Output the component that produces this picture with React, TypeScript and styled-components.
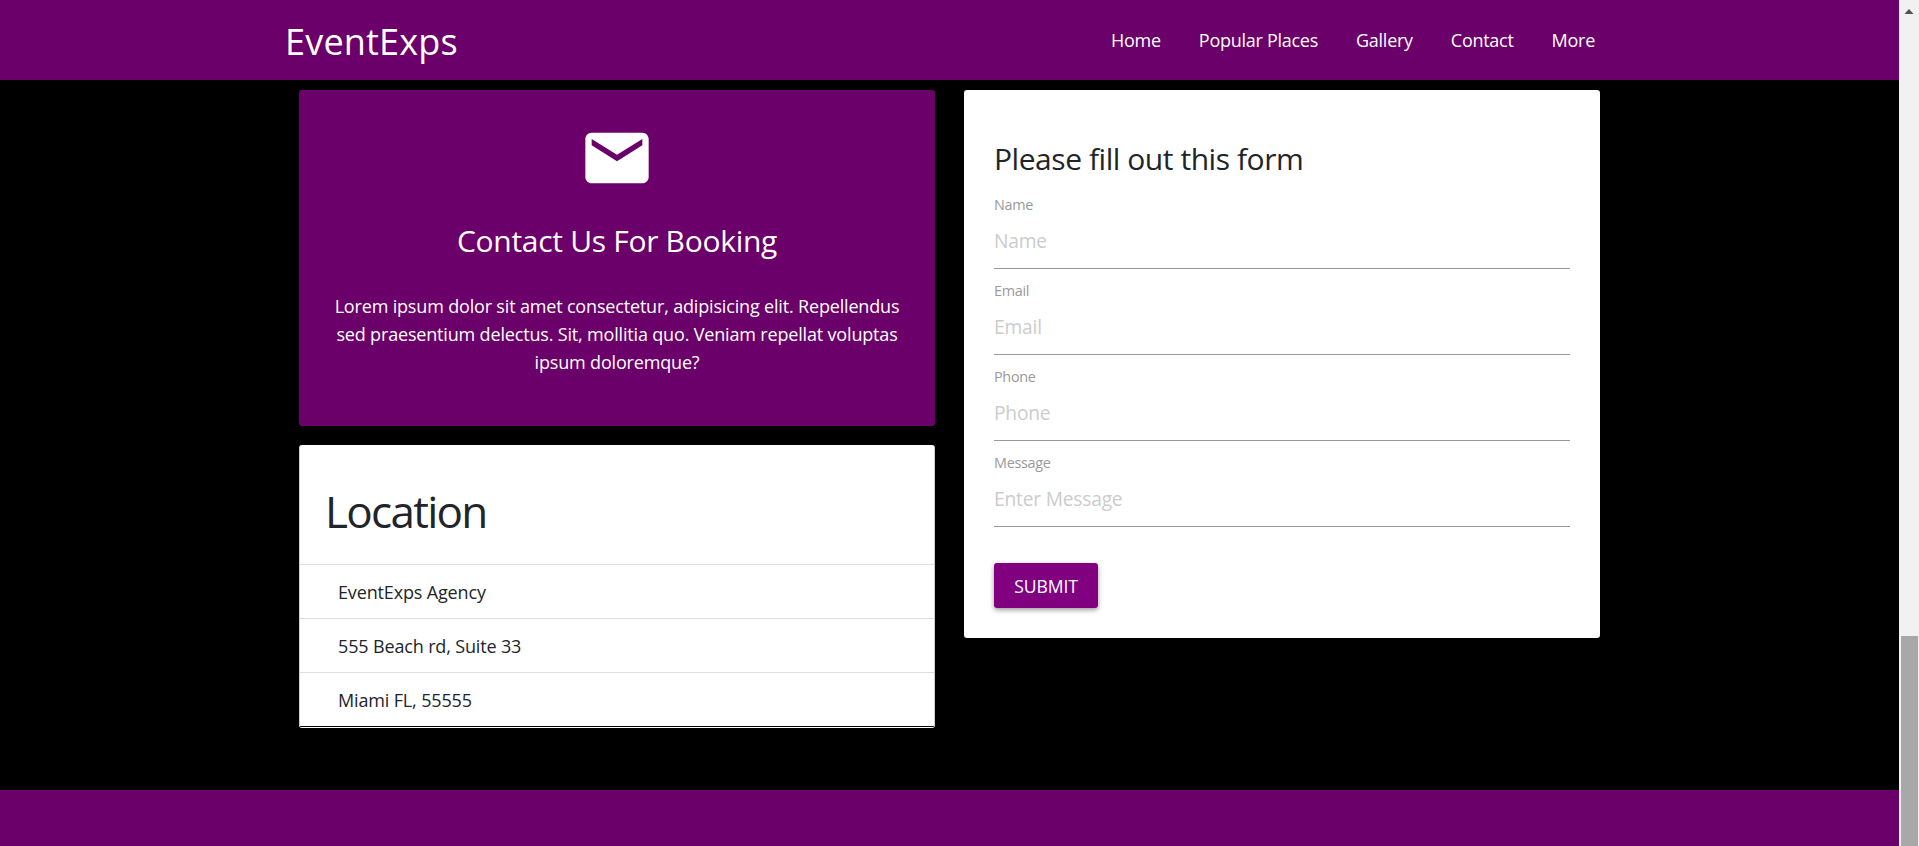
import React from 'react';
import styled, { createGlobalStyle } from 'styled-components';

const purple = '#6b006b';

const GlobalStyle = createGlobalStyle`
  * {
    box-sizing: border-box;
  }

  html,
  body {
    margin: 0;
    height: 100%;
    overflow: hidden;
    background: #000;
    font-family: 'Open Sans', 'Noto Sans', sans-serif;
  }
`;

const Shell = styled.div`
  display: flex;
  height: 846px;
`;

const Page = styled.div`
  flex: 1;
  min-width: 0;
  display: flex;
  flex-direction: column;
`;

const Navbar = styled.nav`
  height: 80px;
  flex: none;
  background: ${purple};
  display: flex;
  align-items: center;
  justify-content: space-between;
  padding: 0 304px 0 285px;
`;

const Brand = styled.a`
  color: #fff;
  font-size: 36px;
  line-height: 1;
  letter-spacing: 0.2px;
  padding-top: 3px;
`;

const NavLinks = styled.ul`
  display: flex;
  gap: 38px;
  margin: 0;
  padding: 0 0 1px;
  list-style: none;
`;

const NavLink = styled.li`
  color: #fff;
  font-size: 18px;
  letter-spacing: -0.27px;
`;

const Main = styled.main`
  flex: 1;
  display: grid;
  grid-template-columns: 636px 636px;
  column-gap: 29px;
  align-content: start;
  padding: 10px 0 0 299px;
`;

const LeftColumn = styled.div`
  display: flex;
  flex-direction: column;
  gap: 19px;
`;

const Card = styled.section`
  background: #fff;
  border-radius: 3px;
  overflow: hidden;
`;

const BookingCard = styled(Card)`
  height: 336px;
  background: ${purple};
  color: #fff;
  text-align: center;
  padding: 30px 30px 0;
`;

const MailIcon = styled.svg`
  display: block;
  width: 76px;
  height: 76px;
  margin: 0 auto 27px;
  fill: #fff;
`;

const BookingTitle = styled.h2`
  margin: 0 0 33px;
  font-size: 30px;
  font-weight: 400;
  line-height: 36px;
  letter-spacing: -0.3px;
`;

const BookingText = styled.p`
  margin: 0;
  font-size: 18px;
  line-height: 28px;
  letter-spacing: -0.17px;
`;

const LocationCard = styled(Card)`
  height: 283px;
  border-left: 1px solid #ccc;
  border-right: 1px solid #ccc;
`;

const LocationTitle = styled.h1`
  height: 119px;
  margin: 0;
  padding: 12px 0 0 25px;
  display: flex;
  align-items: center;
  color: #212529;
  font-size: 44px;
  font-weight: 400;
  letter-spacing: -1.7px;
`;

const LocationList = styled.ul`
  margin: 0;
  padding: 0;
  list-style: none;
  border-bottom: 1px solid #000;
`;

const LocationItem = styled.li`
  height: 54px;
  display: flex;
  align-items: center;
  padding-left: 38px;
  border-top: 1px solid #ddd;
  color: #212529;
  font-size: 18px;
  letter-spacing: -0.15px;
`;

const FormCard = styled(Card)`
  height: 548px;
  padding: 48px 30px 0;
`;

const FormTitle = styled.h3`
  margin: 0 0 3px;
  color: #212529;
  font-size: 30px;
  font-weight: 400;
  line-height: 42px;
  letter-spacing: -0.45px;
`;

const Field = styled.label`
  display: block;
  height: 86px;
  padding-top: 12px;
  border-bottom: 1px solid #999;
`;

const FieldLabel = styled.span`
  display: block;
  color: #999;
  font-size: 14.4px;
  line-height: 20px;
  letter-spacing: -0.3px;
`;

const FieldInput = styled.input`
  display: block;
  width: 100%;
  height: 42px;
  margin-top: 4px;
  padding: 0;
  border: 0;
  outline: 0;
  background: transparent;
  font-family: inherit;
  font-size: 19.2px;
  letter-spacing: -0.2px;

  &::placeholder {
    color: #ccc;
    opacity: 1;
  }
`;

const SubmitButton = styled.button`
  display: block;
  width: 104px;
  height: 45px;
  margin-top: 36px;
  border: 0;
  border-radius: 3px;
  background: #800080;
  color: #fff;
  font-family: inherit;
  font-size: 17.6px;
  letter-spacing: -0.1px;
  box-shadow: 0 2px 5px rgba(0, 0, 0, 0.4);
`;

const Footer = styled.footer`
  height: 56px;
  flex: none;
  background: ${purple};
`;

const Scrollbar = styled.div`
  width: 20px;
  flex: none;
  background: #f1f1f1;
  display: flex;
  flex-direction: column;
  justify-content: space-between;
`;

const ScrollArrow = styled.svg`
  display: block;
  width: 20px;
  height: 20px;
  fill: #505050;
`;

const ScrollThumb = styled.div`
  width: 17px;
  height: 210px;
  margin-left: 2px;
  background: #a8a8a8;
`;

const fields = [
  { label: 'Name', placeholder: 'Name' },
  { label: 'Email', placeholder: 'Email' },
  { label: 'Phone', placeholder: 'Phone' },
  { label: 'Message', placeholder: 'Enter Message' },
];

const navItems = ['Home', 'Popular Places', 'Gallery', 'Contact', 'More'];
const addressLines = ['EventExps Agency', '555 Beach rd, Suite 33', 'Miami FL, 55555'];

export default function App() {
  return (
    <>
      <GlobalStyle />
      <Shell>
        <Page>
          <Navbar>
            <Brand>EventExps</Brand>
            <NavLinks>
              {navItems.map((item) => (
                <NavLink key={item}>{item}</NavLink>
              ))}
            </NavLinks>
          </Navbar>
          <Main>
            <LeftColumn>
              <BookingCard>
                <MailIcon viewBox="0 0 24 24">
                  <path d="M20 4H4c-1.1 0-1.99.9-1.99 2L2 18c0 1.1.9 2 2 2h16c1.1 0 2-.9 2-2V6c0-1.1-.9-2-2-2zm0 4l-8 5-8-5V6l8 5 8-5v2z" />
                </MailIcon>
                <BookingTitle>Contact Us For Booking</BookingTitle>
                <BookingText>
                  Lorem ipsum dolor sit amet consectetur, adipisicing elit. Repellendus sed praesentium delectus. Sit,
                  mollitia quo. Veniam repellat voluptas ipsum doloremque?
                </BookingText>
              </BookingCard>
              <LocationCard>
                <LocationTitle>Location</LocationTitle>
                <LocationList>
                  {addressLines.map((line) => (
                    <LocationItem key={line}>{line}</LocationItem>
                  ))}
                </LocationList>
              </LocationCard>
            </LeftColumn>
            <FormCard>
              <FormTitle>Please fill out this form</FormTitle>
              {fields.map((field) => (
                <Field key={field.label}>
                  <FieldLabel>{field.label}</FieldLabel>
                  <FieldInput placeholder={field.placeholder} />
                </Field>
              ))}
              <SubmitButton>SUBMIT</SubmitButton>
            </FormCard>
          </Main>
          <Footer />
        </Page>
        <Scrollbar>
          <ScrollArrow viewBox="0 0 20 20">
            <path d="M10 9l4.5 5h-9z" />
          </ScrollArrow>
          <ScrollThumb />
        </Scrollbar>
      </Shell>
    </>
  );
}
